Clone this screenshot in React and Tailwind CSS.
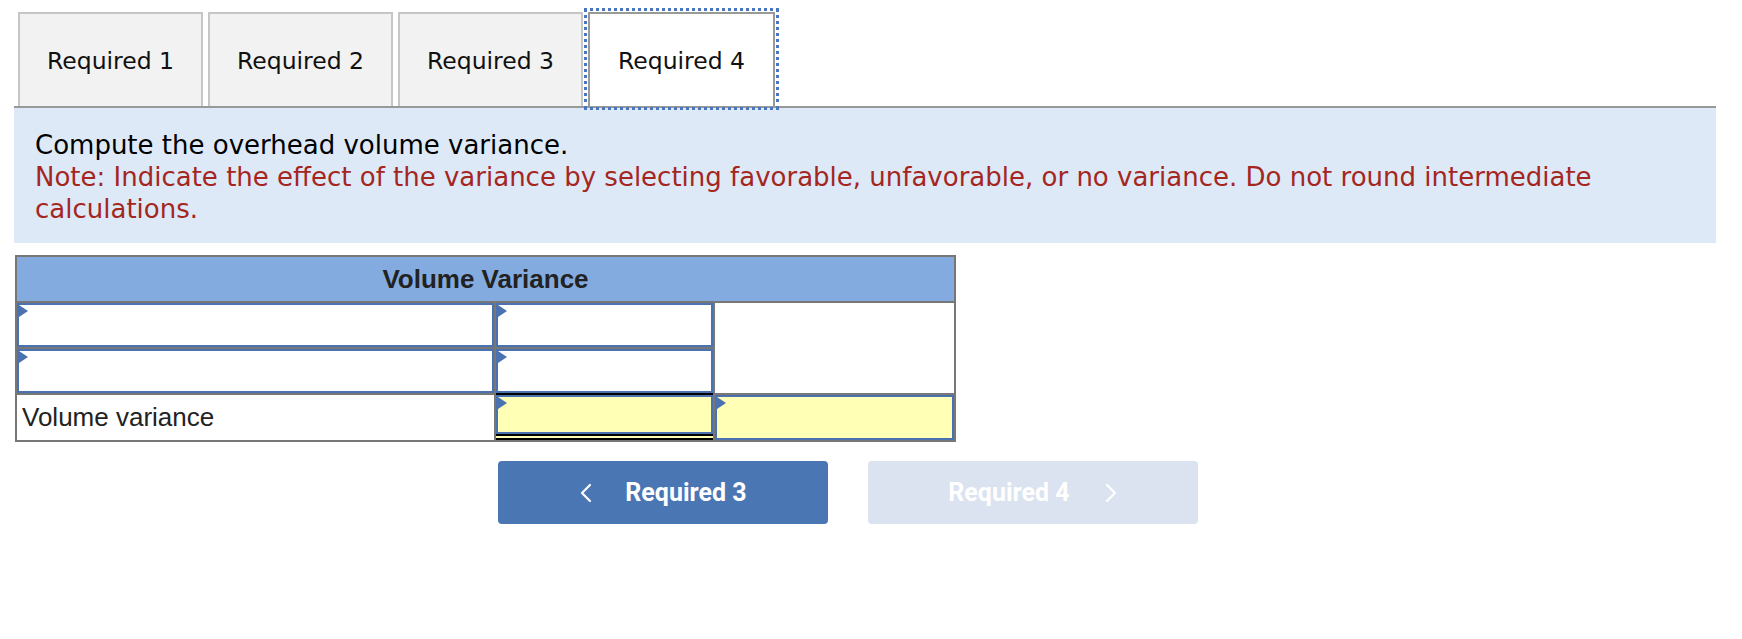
import { useState } from "react";

const tabs = ["Required 1", "Required 2", "Required 3", "Required 4"];

// small blue marker in the corner of an answer cell
function Marker() {
  return (
    <span className="absolute top-0 left-0 w-0 h-0 border-y-[6px] border-y-transparent border-l-[9px] border-l-[#4a72b0]" />
  );
}

function InputCell({ yellow, className = "" }) {
  return (
    <div
      className={`relative h-full border-2 border-[#4a72b0] ${
        yellow ? "bg-[#ffffb5]" : "bg-white"
      } ${className}`}
    >
      <Marker />
    </div>
  );
}

export default function App() {
  const [active, setActive] = useState(3);

  return (
    <div className="w-[1742px] h-[639px] bg-white pl-[14px] pt-[12px]">
      {/* TABS */}
      <div className="flex items-end gap-[5px] ml-[4px]">
        {tabs.map((t, i) => (
          <button
            key={t}
            onClick={() => setActive(i)}
            className={
              i === active
                ? "relative z-10 w-[187px] h-[94px] pt-[4px] bg-white border-2 border-b-0 border-[#999] outline-[3px] outline-dotted outline-[#4a76c0] outline-offset-[1px] text-[23.5px] text-[#111] font-['DejaVu_Sans',sans-serif]"
                : "w-[185px] h-[94px] pt-[4px] bg-[#f2f2f2] border-2 border-b-0 border-[#c6c6c6] text-[23.5px] text-[#111] font-['DejaVu_Sans',sans-serif]"
            }
          >
            {t}
          </button>
        ))}
      </div>

      {/* INSTRUCTIONS */}
      <div className="w-[1702px] border-t-2 border-[#999] bg-[#dde9f7] pt-[21px] pb-[18px] px-[21px] text-[26px] leading-[32px] font-['DejaVu_Sans',sans-serif]">
        <p className="text-black">Compute the overhead volume variance.</p>
        <p className="text-[#a4261f]">
          Note: Indicate the effect of the variance by selecting favorable,
          unfavorable, or no variance. Do not round intermediate calculations.
        </p>
      </div>

      {/* TABLE */}
      <div className="mt-[12px] ml-[1px] w-[941px] border-2 border-[#777] bg-[#777] grid grid-cols-[477px_217px_239px] gap-[2px] font-['Liberation_Sans',Arial,sans-serif] text-[26px] text-[#222]">
        <div className="col-span-3 h-[44px] bg-[#84abdf] flex items-center justify-center font-bold">
          Volume Variance
        </div>

        <div className="h-[44px]">
          <InputCell />
        </div>
        <div className="h-[44px]">
          <InputCell />
        </div>
        <div className="row-span-2 bg-white" />

        <div className="h-[44px]">
          <InputCell />
        </div>
        <div className="h-[44px]">
          <InputCell />
        </div>

        <div className="h-[45px] bg-white flex items-center pl-[5px]">
          Volume variance
        </div>
        <div className="h-[47px] -mt-[2px] border-t-2 border-black border-b-[6px] border-double border-b-black bg-[#ffffb5]">
          <InputCell yellow />
        </div>
        <div className="h-[45px]">
          <InputCell yellow />
        </div>
      </div>

      {/* NAV BUTTONS */}
      <div className="flex gap-[40px] mt-[19px] ml-[484px] font-['Roboto',sans-serif] font-bold text-[25px] text-white">
        <button className="w-[330px] h-[63px] rounded-[4px] bg-[#4a76b4] flex items-center justify-center gap-[32px]">
          <svg width="14" height="20" viewBox="0 0 14 20" fill="none">
            <polyline
              points="11,2 3,10 11,18"
              stroke="white"
              strokeWidth="2.2"
              strokeLinecap="round"
              strokeLinejoin="round"
            />
          </svg>
          <span>Required 3</span>
        </button>
        <button className="w-[330px] h-[63px] rounded-[4px] bg-[#dae3ef] flex items-center justify-center gap-[34px] cursor-default">
          <span>Required 4</span>
          <svg width="14" height="20" viewBox="0 0 14 20" fill="none">
            <polyline
              points="3,2 11,10 3,18"
              stroke="white"
              strokeWidth="2.2"
              strokeLinecap="round"
              strokeLinejoin="round"
            />
          </svg>
        </button>
      </div>
    </div>
  );
}
